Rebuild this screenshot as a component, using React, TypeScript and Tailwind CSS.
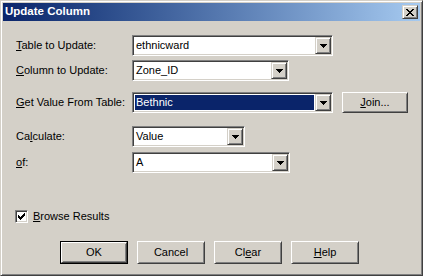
const sunken =
  'border border-t-[#808080] border-l-[#808080] border-r-white border-b-white shadow-[inset_1px_1px_#404040,inset_-1px_-1px_#d4d0c8]'
const raised =
  'border border-t-[#d4d0c8] border-l-[#d4d0c8] border-r-[#404040] border-b-[#404040] shadow-[inset_1px_1px_#fff,inset_-1px_-1px_#808080] bg-[#d4d0c8]'
const button =
  'border border-t-white border-l-white border-r-[#404040] border-b-[#404040] shadow-[inset_1px_1px_#d4d0c8,inset_-1px_-1px_#808080] bg-[#d4d0c8]'

function Arrow() {
  return (
    <svg width="7" height="4" viewBox="0 0 7 4" shapeRendering="crispEdges">
      <path d="M0 0h7v1h-1v1h-1v1h-1v1h-1v-1h-1v-1h-1v-1h-1z" fill="#000" />
    </svg>
  )
}

function Combo({ value, className, selected }: { value: string; className: string; selected?: boolean }) {
  return (
    <div className={`flex h-[21px] bg-white p-[1px] ${sunken} ${className}`}>
      <div className="flex min-w-0 flex-1 p-px">
        <div
          className={`flex-1 pl-[1px] text-[11px] leading-[15px] ${selected ? 'bg-[#0a246a] text-white' : 'text-black'}`}
        >
          {value}
        </div>
      </div>
      <div className={`flex h-[17px] w-[16px] items-center justify-center ${raised}`}>
        <Arrow />
      </div>
    </div>
  )
}

function Label({ children }: { children: React.ReactNode }) {
  return <div className="w-[116px] text-[11px] text-black">{children}</div>
}

function PushButton({ children, isDefault }: { children: React.ReactNode; isDefault?: boolean }) {
  if (isDefault) {
    return (
      <div className="h-[23px] w-[68px] border border-black">
        <div className={`flex h-full w-full items-center justify-center text-[11px] ${button}`}>{children}</div>
      </div>
    )
  }
  return (
    <div className={`flex h-[23px] w-[68px] items-center justify-center text-[11px] ${button}`}>{children}</div>
  )
}

export default function App() {
  return (
    <div className="h-[276px] w-[423px] border border-t-[#d4d0c8] border-l-[#d4d0c8] border-r-[#404040] border-b-[#404040] bg-[#d4d0c8] p-[2px] font-['Liberation_Sans',Arial,sans-serif] text-black shadow-[inset_1px_1px_#fff,inset_-1px_-1px_#808080]">
      <div className="flex h-[18px] items-center justify-between bg-linear-to-r from-[#0a246a] to-[#a6caf0] pl-[2px] pr-[2px]">
        <span className="text-[11.5px] font-bold text-white">Update Column</span>
        <div className={`flex h-[14px] w-[16px] items-center justify-center ${raised}`}>
          <svg width="8" height="7" viewBox="0 0 8 7" shapeRendering="crispEdges">
            <path
              d="M0 0h2v1h1v1h2v-1h1v-1h2v1h-1v1h-1v1h-1v1h1v1h1v1h1v1h-2v-1h-1v-1h-2v1h-1v1h-2v-1h1v-1h1v-1h1v-1h-1v-1h-1v-1h-1z"
              fill="#000"
            />
          </svg>
        </div>
      </div>

      <div className="flex flex-col pl-[13px]">
        <div className="mt-[14px] flex items-center">
          <Label>
            <u>T</u>able to Update:
          </Label>
          <Combo value="ethnicward" className="w-[201px]" />
        </div>
        <div className="mt-[4px] flex items-center">
          <Label>
            <u>C</u>olumn to Update:
          </Label>
          <Combo value="Zone_ID" className="w-[157px]" />
        </div>
        <div className="mt-[11px] flex items-center">
          <Label>
            <u>G</u>et Value From Table:
          </Label>
          <Combo value="Bethnic" className="w-[201px]" selected />
          <div className={`ml-[9px] flex h-[21px] w-[66px] items-center justify-center text-[11px] ${button}`}>
            <span>
              <u>J</u>oin...
            </span>
          </div>
        </div>
        <div className="mt-[13px] flex items-center">
          <Label>
            Ca<u>l</u>culate:
          </Label>
          <Combo value="Value" className="w-[113px]" />
        </div>
        <div className="mt-[5px] flex items-center">
          <Label>
            <u>o</u>f:
          </Label>
          <Combo value="A" className="w-[158px]" />
        </div>

        <div className="-ml-px mt-[35px] flex items-center gap-[5px]">
          <div className={`flex h-[13px] w-[13px] items-center justify-center bg-white ${sunken}`}>
            <svg width="7" height="7" viewBox="0 0 7 7" shapeRendering="crispEdges">
              <path d="M0 2h1v1h1v1h1v-1h1v-1h1v-1h1v-1h1v3h-1v1h-1v1h-1v1h-1v1h-1v-1h-1v-1h-1z" fill="#000" />
            </svg>
          </div>
          <span className="text-[11px]">
            <u>B</u>rowse Results
          </span>
        </div>

        <div className="ml-[44px] mt-[16px] flex gap-[9px]">
          <PushButton isDefault>OK</PushButton>
          <PushButton>Cancel</PushButton>
          <PushButton>
            <span>
              Cl<u>e</u>ar
            </span>
          </PushButton>
          <PushButton>
            <span>
              <u>H</u>elp
            </span>
          </PushButton>
        </div>
      </div>
    </div>
  )
}
